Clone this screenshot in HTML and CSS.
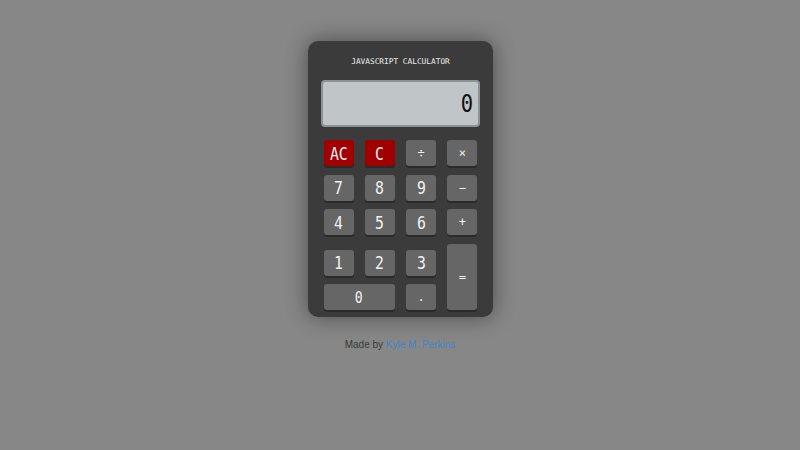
FILE: index.html
```html
<!DOCTYPE html>
<html lang="en">

<head>
    <meta charset="UTF-8">
    <meta name="viewport" content="width=device-width, initial-scale=1.0">
    <title>JavaScript Calculator</title>
    <link rel="stylesheet" href="styles.css">
</head>

<body>
    <div class="calculator">
        <h1 class="title">JAVASCRIPT CALCULATOR</h1>
        <div class="display" id="display"><span>0</span></div>

        <div class="keys">
            <button class="key red"><span>AC</span></button>
            <button class="key red"><span>C</span></button>
            <button class="key op">&divide;</button>
            <button class="key op">&times;</button>

            <button class="key"><span>7</span></button>
            <button class="key"><span>8</span></button>
            <button class="key"><span>9</span></button>
            <button class="key op">&minus;</button>

            <button class="key"><span>4</span></button>
            <button class="key"><span>5</span></button>
            <button class="key"><span>6</span></button>
            <button class="key op">+</button>

            <button class="key low"><span>1</span></button>
            <button class="key low"><span>2</span></button>
            <button class="key low"><span>3</span></button>
            <button class="key op equals">=</button>

            <button class="key zero"><span>0</span></button>
            <button class="key op">.</button>
        </div>
    </div>

    <footer>
        <p>Made by <a href="#">Kyle M. Perkins</a></p>
    </footer>
</body>

</html>
```

FILE: styles.css
```css
body {
    font-family: 'Liberation Sans', Arial, sans-serif;
    background-color: #878787;
    margin: 0;
    padding: 0;
}

.calculator {
    width: 185px;
    height: 276px;
    box-sizing: border-box;
    margin: 41px auto 0;
    padding: 15px 15px 0 16px;
    background-color: #3b3b3b;
    border-radius: 10px;
    box-shadow: 0 0 22px rgba(0, 0, 0, 0.45);
    font-family: 'DejaVu Sans Mono', monospace;
}

.title {
    margin: 0;
    text-align: center;
    color: #eee;
    font-size: 7.8px;
    font-weight: normal;
    line-height: 12px;
}

.display {
    margin: 12px -2px 0 -3px;
    height: 47px;
    box-sizing: border-box;
    background-color: #c0c6c8;
    border: 2px solid #8d9294;
    border-radius: 4px;
    padding: 0 4px;
    text-align: right;
    font-size: 25px;
    line-height: 43px;
    color: #111;
}

/* narrow the mono glyphs a little */
.display span,
.key span {
    display: inline-block;
    transform: scaleX(0.82);
}

.display span {
    transform-origin: right center;
}

.keys {
    display: grid;
    grid-template-columns: repeat(4, 30px);
    grid-template-rows: 26px 26px 26px 32px 26px;
    column-gap: 11.3px;
    row-gap: 8.5px;
    margin-top: 13px;
}

.key {
    border: none;
    padding: 0;
    border-radius: 3px;
    background-color: #666;
    color: #f2f2f2;
    font-family: 'DejaVu Sans Mono', monospace;
    font-size: 18px;
    box-shadow: 0 2px 0 #2a2a2a;
    cursor: pointer;
}

.key.red {
    background-color: #a00000;
}

.key.op {
    font-size: 12px;
}

.key.low {
    margin-top: 6px;
}

.key.equals {
    grid-row: 4 / 6;
    grid-column: 4;
}

.key.zero {
    grid-column: 1 / 3;
    font-size: 16px;
}

footer {
    text-align: center;
    margin-top: 22px;
    font-size: 10px;
    color: #3a3a3a;
}

footer p {
    margin: 0;
}

footer a {
    color: #4585c8;
    text-decoration: none;
}
```
